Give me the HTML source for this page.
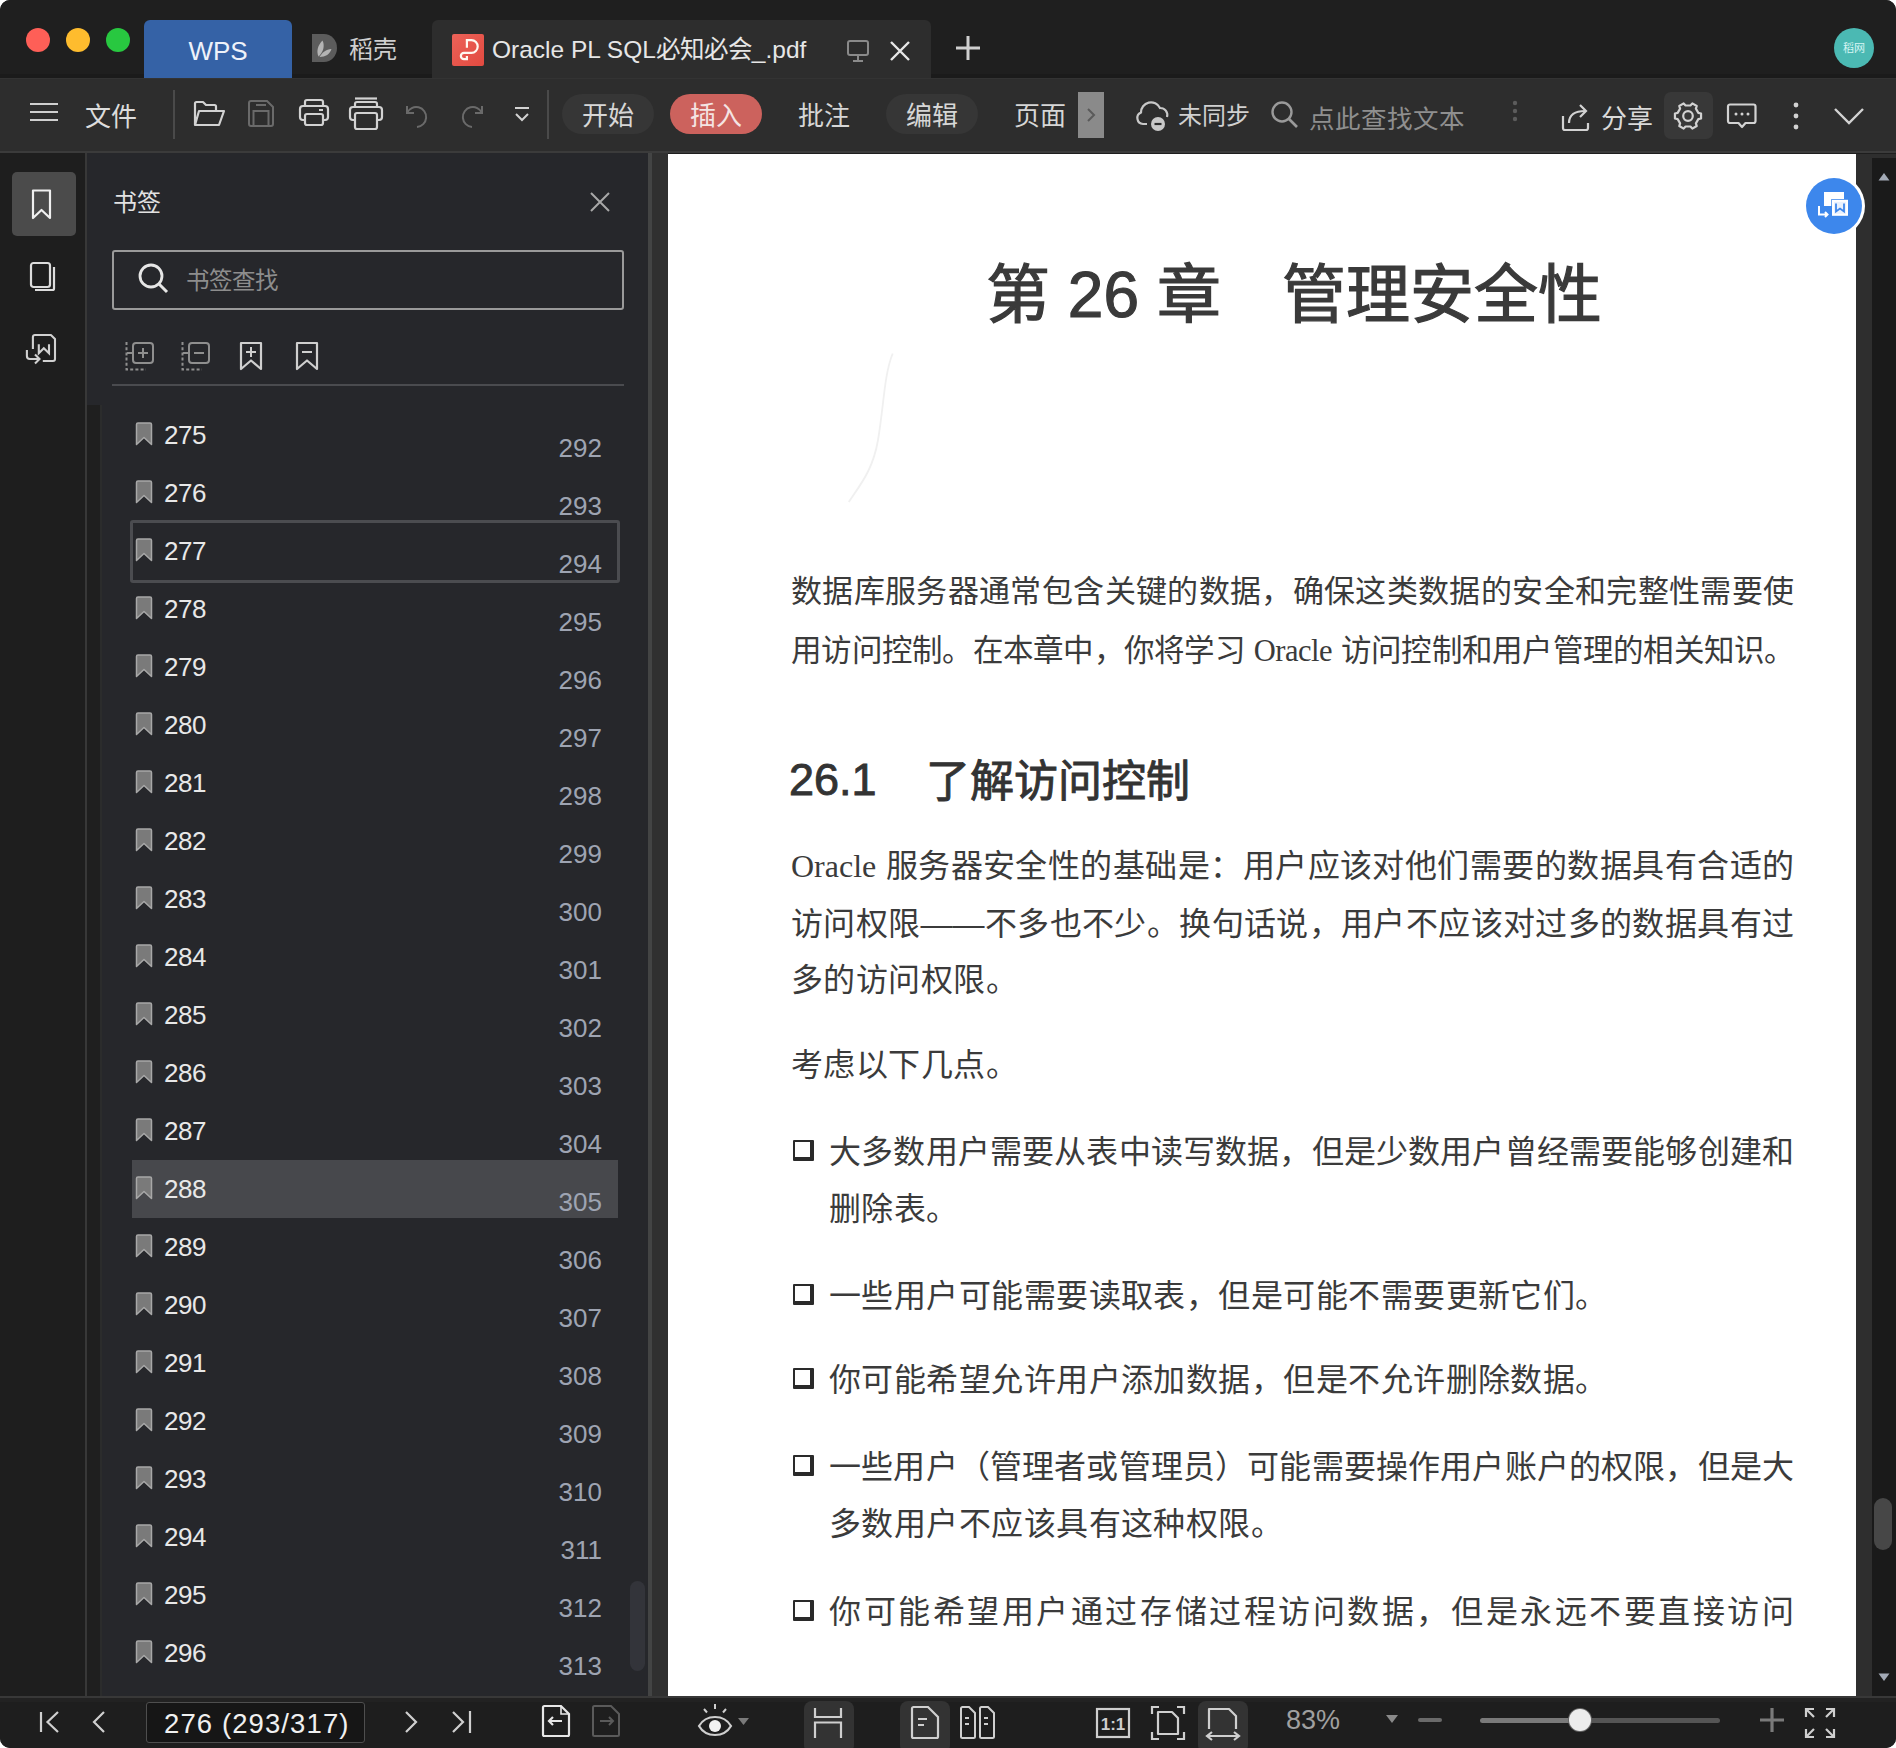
<!DOCTYPE html>
<html lang="zh-CN"><head><meta charset="utf-8"><title>WPS PDF</title>
<style>
html,body{margin:0;padding:0;background:#ffffff;}
body{width:1896px;height:1748px;overflow:hidden;position:relative;font-family:"Liberation Sans", sans-serif;}
#win{position:absolute;left:0;top:0;width:1896px;height:1748px;border-radius:10px;overflow:hidden;background:#1e1e1e;}
.t{position:absolute;white-space:nowrap;font-family:"Liberation Sans", sans-serif;}
.r{position:absolute;}
.sf{font-family:"Liberation Serif", serif;}
</style></head><body><div id="win">
<div class="r" style="left:0px;top:0px;width:1896px;height:78px;background:#1f1f1f;"></div>
<div class="r" style="left:0px;top:74px;width:1896px;height:4px;background:#1b1b1b;"></div>
<div class="r" style="left:26px;top:28px;width:24px;height:24px;background:#fe5f57;border-radius:50%;"></div>
<div class="r" style="left:66px;top:28px;width:24px;height:24px;background:#febc2e;border-radius:50%;"></div>
<div class="r" style="left:106px;top:28px;width:24px;height:24px;background:#28c840;border-radius:50%;"></div>
<div class="r" style="left:144px;top:20px;width:148px;height:58px;background:#3562a6;border-radius:6px 6px 0 0;"></div>
<div class="t " style="left:144px;top:37.5px;font-size:26px;line-height:26px;color:#eef2fa;width:148px;text-align:center;">WPS</div>
<svg class="r" style="left:310px;top:33px;" width="28" height="30" viewBox="0 0 28 30" fill="none"><path d="M2 1 H14 A13 14 0 0 1 14 29 H2 Z" fill="#5c5c5c"/><path d="M8.5 23.5 C 6 18, 8 12, 12.5 7.5 C 15 12.5, 13.5 19, 8.5 23.5 Z" fill="#b4b4b4"/><path d="M9.5 24 C 12 19.5, 16 16.5, 21.5 16 C 20 21, 15.5 24, 9.5 24 Z" fill="#b4b4b4"/></svg>
<div class="t " style="left:349px;top:37.9px;font-size:24px;line-height:24px;color:#cfcfcf;text-align:left;">稻壳</div>
<div class="r" style="left:432px;top:20px;width:499px;height:58px;background:#2d2d2d;border-radius:6px 6px 0 0;"></div>
<svg class="r" style="left:452px;top:34px;" width="32" height="32" viewBox="0 0 32 32" fill="none"><defs><linearGradient id="pg" x1="0" y1="0" x2="1" y2="1"><stop offset="0" stop-color="#ec6258"/><stop offset="1" stop-color="#e24a40"/></linearGradient></defs><rect x="0" y="0" width="32" height="32" rx="2" fill="url(#pg)"/><path d="M14.9 13.8 V6.2 H19.5 A6.2 6.35 0 0 1 19.5 18.9 H12 A3.15 3.15 0 0 0 12 25.2 H14.9 V22" stroke="#fff8f0" stroke-width="2.2" fill="none"/></svg>
<div class="t " style="left:492px;top:38.2px;font-size:24.5px;line-height:24.5px;color:#e6e6e6;text-align:left;">Oracle PL SQL必知必会_.pdf</div>
<svg class="r" style="left:846px;top:39px;" width="24" height="24" viewBox="0 0 24 24" fill="none"><rect x="2" y="2" width="20" height="14" rx="2" stroke="#8a8a8a" stroke-width="2"/><path d="M12 16 V21 M7 22 H17" stroke="#8a8a8a" stroke-width="2"/></svg>
<svg class="r" style="left:888px;top:39px;" width="24" height="24" viewBox="0 0 24 24" fill="none"><path d="M3 3 L21 21 M21 3 L3 21" stroke="#e8e8e8" stroke-width="2.4"/></svg>
<svg class="r" style="left:954px;top:34px;" width="28" height="28" viewBox="0 0 28 28" fill="none"><path d="M14 2 V26 M2 14 H26" stroke="#cfcfcf" stroke-width="3"/></svg>
<div class="r" style="left:1834px;top:28px;width:40px;height:40px;background:#4bb9b3;border-radius:50%;"></div>
<div class="t " style="left:1834px;top:43.2px;font-size:11px;line-height:11px;color:#d8f6f3;width:40px;text-align:center;">稻网</div>
<div class="r" style="left:0px;top:78px;width:1896px;height:73px;background:#2d2d2d;"></div>
<div class="r" style="left:0px;top:78px;width:1896px;height:1px;background:#333333;"></div>
<div class="r" style="left:0px;top:151px;width:1896px;height:2px;background:#3b3b3b;"></div>
<svg class="r" style="left:28px;top:100px;" width="32" height="24" viewBox="0 0 32 24" fill="none"><path d="M2 4 H30 M2 12 H30 M2 20 H30" stroke="#cfcfcf" stroke-width="2.2"/></svg>
<div class="t " style="left:85px;top:103.6px;font-size:26px;line-height:26px;color:#dcdcdc;text-align:left;">文件</div>
<div class="r" style="left:173px;top:90px;width:2px;height:49px;background:#4a4a4a;"></div>
<svg class="r" style="left:192px;top:100px;" width="36" height="28" viewBox="0 0 36 28" fill="none"><path d="M3 25 V3.5 A1.5 1.5 0 0 1 4.5 2 H11 L14 5 H22.5 A1.5 1.5 0 0 1 24 6.5 V10" stroke="#d2d2d2" stroke-width="2.2" stroke-linejoin="round"/><path d="M7 11 H32 L27 25 H3 Z" stroke="#d2d2d2" stroke-width="2.2" stroke-linejoin="round"/></svg>
<svg class="r" style="left:246px;top:99px;" width="30" height="29" viewBox="0 0 30 29" fill="none"><path d="M3 4 A2 2 0 0 1 5 2 H21 L27 8 V25 A2 2 0 0 1 25 27 H5 A2 2 0 0 1 3 25 Z" stroke="#6a6a6a" stroke-width="2"/><path d="M7.5 27 V12 H22.5 V27 M10 6 H20" stroke="#6a6a6a" stroke-width="2"/></svg>
<svg class="r" style="left:298px;top:98px;" width="32" height="30" viewBox="0 0 32 30" fill="none"><path d="M7 8 V4 A2 2 0 0 1 9 2 H23 A2 2 0 0 1 25 4 V8" stroke="#d2d2d2" stroke-width="2.2"/><path d="M7 22 H5 A3 3 0 0 1 2 19 V11 A3 3 0 0 1 5 8 H27 A3 3 0 0 1 30 11 V19 A3 3 0 0 1 27 22 H25" stroke="#d2d2d2" stroke-width="2.2"/><rect x="7" y="16" width="18" height="11" rx="2" stroke="#d2d2d2" stroke-width="2.2"/><path d="M21 12 H25" stroke="#d2d2d2" stroke-width="2"/></svg>
<svg class="r" style="left:348px;top:96px;" width="36" height="36" viewBox="0 0 36 36" fill="none"><path d="M7 2.5 H29" stroke="#d2d2d2" stroke-width="2.2"/><path d="M7 11 V8 A2 2 0 0 1 9 6 H27 A2 2 0 0 1 29 8 V11" stroke="#d2d2d2" stroke-width="2.2"/><path d="M7 24 H5 A3 3 0 0 1 2 21 V14 A3 3 0 0 1 5 11 H31 A3 3 0 0 1 34 14 V21 A3 3 0 0 1 31 24 H29" stroke="#d2d2d2" stroke-width="2.2"/><rect x="7" y="17" width="22" height="16" rx="2" stroke="#d2d2d2" stroke-width="2.2"/></svg>
<svg class="r" style="left:403px;top:102px;" width="30" height="28" viewBox="0 0 30 28" fill="none"><path d="M4 4 V11 H11" stroke="#6a6a6a" stroke-width="2"/><path d="M4 11 A10 10 0 1 1 14 25" stroke="#6a6a6a" stroke-width="2"/></svg>
<svg class="r" style="left:456px;top:102px;" width="30" height="28" viewBox="0 0 30 28" fill="none"><path d="M26 4 V11 H19" stroke="#6a6a6a" stroke-width="2"/><path d="M26 11 A10 10 0 1 0 16 25" stroke="#6a6a6a" stroke-width="2"/></svg>
<svg class="r" style="left:512px;top:105px;" width="20" height="20" viewBox="0 0 20 20" fill="none"><path d="M3 3 H17" stroke="#d2d2d2" stroke-width="2"/><path d="M4 9 L10 15 L16 9" stroke="#d2d2d2" stroke-width="2"/></svg>
<div class="r" style="left:547px;top:90px;width:2px;height:49px;background:#4a4a4a;"></div>
<div class="r" style="left:562px;top:94px;width:92px;height:40px;background:#363636;border-radius:20px;"></div>
<div class="t " style="left:562px;top:102.6px;font-size:26px;line-height:26px;color:#d6d6d6;width:92px;text-align:center;">开始</div>
<div class="r" style="left:670px;top:94px;width:92px;height:40px;background:#cc625d;border-radius:20px;"></div>
<div class="t " style="left:670px;top:102.6px;font-size:26px;line-height:26px;color:#f4e4e3;width:92px;text-align:center;">插入</div>
<div class="t " style="left:778px;top:102.6px;font-size:26px;line-height:26px;color:#d6d6d6;width:92px;text-align:center;">批注</div>
<div class="r" style="left:886px;top:94px;width:92px;height:40px;background:#363636;border-radius:20px;"></div>
<div class="t " style="left:886px;top:102.6px;font-size:26px;line-height:26px;color:#d6d6d6;width:92px;text-align:center;">编辑</div>
<div class="t " style="left:1014px;top:102.6px;font-size:26px;line-height:26px;color:#d6d6d6;text-align:left;">页面</div>
<div class="r" style="left:1078px;top:92px;width:26px;height:46px;background:#8a8a8a;"></div>
<svg class="r" style="left:1078px;top:92px;" width="26" height="46" viewBox="0 0 26 46" fill="none"><path d="M10 17 L16 23 L10 29" stroke="#5a5a5a" stroke-width="2"/></svg>
<svg class="r" style="left:1135px;top:98px;" width="38" height="36" viewBox="0 0 38 36" fill="none"><path d="M12 26 H8 A6 6 0 0 1 6 14.5 A10 10 0 0 1 25 10 A7 7 0 0 1 32 19" stroke="#c8c8c8" stroke-width="2.2" fill="none"/><circle cx="23" cy="26" r="7" fill="#c8c8c8"/><path d="M19.5 26 H26.5" stroke="#2b2b2b" stroke-width="2.2"/></svg>
<div class="t " style="left:1178px;top:104.4px;font-size:24px;line-height:24px;color:#d0d0d0;text-align:left;">未同步</div>
<svg class="r" style="left:1270px;top:100px;" width="30" height="30" viewBox="0 0 30 30" fill="none"><circle cx="12" cy="12" r="9.5" stroke="#9a9a9a" stroke-width="2.4"/><path d="M19 19 L27 27" stroke="#9a9a9a" stroke-width="2.6"/></svg>
<div class="t " style="left:1309px;top:106.8px;font-size:25.5px;line-height:25.5px;color:#8f8f8f;text-align:left;">点此查找文本</div>
<svg class="r" style="left:1510px;top:98px;" width="10" height="30" viewBox="0 0 10 30" fill="none"><circle cx="5" cy="5" r="2.2" fill="#5c5c5c"/><circle cx="5" cy="13" r="2.2" fill="#5c5c5c"/><circle cx="5" cy="21" r="2.2" fill="#5c5c5c"/></svg>
<svg class="r" style="left:1560px;top:102px;" width="32" height="32" viewBox="0 0 32 32" fill="none"><path d="M3 14 V26 A2 2 0 0 0 5 28 H26 A2 2 0 0 0 28 26 V21" stroke="#d2d2d2" stroke-width="2.2"/><path d="M9 21 C 9 13, 15 9, 25 9" stroke="#d2d2d2" stroke-width="2.2"/><path d="M20 3 L26 9 L20 15" stroke="#d2d2d2" stroke-width="2.2"/></svg>
<div class="t " style="left:1601px;top:105.6px;font-size:26px;line-height:26px;color:#dadada;text-align:left;">分享</div>
<div class="r" style="left:1664px;top:92px;width:49px;height:47px;background:#383838;border-radius:7px;"></div>
<svg class="r" style="left:1672px;top:100px;" width="32" height="32" viewBox="0 0 32 32" fill="none"><path d="M26.33 12.84 L29.06 13.46 L29.06 18.54 L26.33 19.16 L23.90 23.37 L24.73 26.04 L20.33 28.58 L18.43 26.52 L13.57 26.52 L11.67 28.58 L7.27 26.04 L8.10 23.37 L5.67 19.16 L2.94 18.54 L2.94 13.46 L5.67 12.84 L8.10 8.63 L7.27 5.96 L11.67 3.42 L13.57 5.48 L18.43 5.48 L20.33 3.42 L24.73 5.96 L23.90 8.63 Z" stroke="#d2d2d2" stroke-width="2.2" stroke-linejoin="round"/><circle cx="16" cy="16" r="4.8" stroke="#d2d2d2" stroke-width="2.2"/></svg>
<svg class="r" style="left:1726px;top:102px;" width="32" height="30" viewBox="0 0 32 30" fill="none"><path d="M4 2.5 H27.5 A2 2 0 0 1 29.5 4.5 V19 A2 2 0 0 1 27.5 21 H19.5 L16 25 L12.5 21 H4 A2 2 0 0 1 2 19 V4.5 A2 2 0 0 1 4 2.5 Z" stroke="#d2d2d2" stroke-width="2.2" stroke-linejoin="round"/><circle cx="10" cy="12" r="1.5" fill="#d2d2d2"/><circle cx="16" cy="12" r="1.5" fill="#d2d2d2"/><circle cx="22" cy="12" r="1.5" fill="#d2d2d2"/></svg>
<svg class="r" style="left:1790px;top:100px;" width="12" height="32" viewBox="0 0 12 32" fill="none"><circle cx="6" cy="5" r="2.4" fill="#d2d2d2"/><circle cx="6" cy="16" r="2.4" fill="#d2d2d2"/><circle cx="6" cy="27" r="2.4" fill="#d2d2d2"/></svg>
<svg class="r" style="left:1832px;top:106px;" width="34" height="20" viewBox="0 0 34 20" fill="none"><path d="M3 3 L17 17 L31 3" stroke="#d2d2d2" stroke-width="2.4"/></svg>
<div class="r" style="left:0px;top:153px;width:85px;height:1543px;background:#1e1e1e;"></div>
<div class="r" style="left:85px;top:153px;width:2px;height:1543px;background:#383838;"></div>
<div class="r" style="left:12px;top:172px;width:64px;height:64px;background:#4b4b4b;border-radius:5px;"></div>
<svg class="r" style="left:30px;top:188px;" width="24" height="34" viewBox="0 0 24 34" fill="none"><path d="M3 2.5 H20 V30 L11.5 22 L3 30 Z" stroke="#f0f0f0" stroke-width="2.2" stroke-linejoin="round"/></svg>
<svg class="r" style="left:28px;top:260px;" width="30" height="34" viewBox="0 0 30 34" fill="none"><rect x="3" y="3" width="19" height="24" rx="2.5" stroke="#dcdcdc" stroke-width="2.2"/><path d="M26 7 V28.5 A1.5 1.5 0 0 1 24.5 30 H7" stroke="#dcdcdc" stroke-width="2.2"/></svg>
<svg class="r" style="left:24px;top:332px;" width="36" height="34" viewBox="0 0 36 34" fill="none"><path d="M8.9 17 V5 A2 2 0 0 1 10.9 3 H26.9 L31 7 V27 A2 2 0 0 1 29 29 H18.8" stroke="#d0d0d0" stroke-width="2.1" stroke-linejoin="round"/><path d="M14.8 12.2 V21.3 L19.8 16.3 L25 21.3 V12.2" stroke="#d0d0d0" stroke-width="2.1"/><path d="M2.9 18 V24 A3 3 0 0 0 5.9 27 H15.5 M11 22.5 L15.5 27 L11 31.5" stroke="#d0d0d0" stroke-width="2.1"/></svg>
<div class="r" style="left:87px;top:153px;width:561px;height:1543px;background:#26272b;"></div>
<div class="r" style="left:648px;top:153px;width:4px;height:1543px;background:#434444;"></div>
<div class="r" style="left:652px;top:153px;width:16px;height:1543px;background:#303030;"></div>
<div class="t " style="left:113px;top:191.4px;font-size:24px;line-height:24px;color:#e2e2e2;text-align:left;">书签</div>
<svg class="r" style="left:588px;top:190px;" width="24" height="24" viewBox="0 0 24 24" fill="none"><path d="M3 3 L21 21 M21 3 L3 21" stroke="#a8a8a8" stroke-width="2"/></svg>
<div class="r" style="left:112px;top:250px;width:512px;height:60px;background:transparent;box-sizing:border-box;border:2px solid #9a9a9a;border-radius:3px;"></div>
<svg class="r" style="left:137px;top:262px;" width="34" height="34" viewBox="0 0 34 34" fill="none"><circle cx="14" cy="14" r="11" stroke="#e6e6e6" stroke-width="2.8"/><path d="M22 22 L30 30" stroke="#e6e6e6" stroke-width="3"/></svg>
<div class="t " style="left:186px;top:269.7px;font-size:23.5px;line-height:23.5px;color:#8d8d8d;text-align:left;">书签查找</div>
<svg class="r" style="left:124px;top:341px;" width="32" height="31" viewBox="0 0 32 31" fill="none"><path d="M2.5 1 V28.5 H22" stroke="#8f8f8f" stroke-width="2" stroke-dasharray="3 2.2"/><path d="M3 12 H8" stroke="#8f8f8f" stroke-width="2"/><rect x="9" y="2" width="20" height="20" rx="3" stroke="#8f8f8f" stroke-width="2"/><path d="M14 12 H24" stroke="#8f8f8f" stroke-width="2"/><path d="M19 7 V17" stroke="#8f8f8f" stroke-width="2"/></svg>
<svg class="r" style="left:180px;top:341px;" width="32" height="31" viewBox="0 0 32 31" fill="none"><path d="M2.5 1 V28.5 H22" stroke="#8f8f8f" stroke-width="2" stroke-dasharray="3 2.2"/><path d="M3 12 H8" stroke="#8f8f8f" stroke-width="2"/><rect x="9" y="2" width="20" height="20" rx="3" stroke="#8f8f8f" stroke-width="2"/><path d="M14 12 H24" stroke="#8f8f8f" stroke-width="2"/></svg>
<svg class="r" style="left:239px;top:341px;" width="24" height="31" viewBox="0 0 24 31" fill="none"><path d="M2 2 H22 V28 L12 19.5 L2 28 Z" stroke="#cfcfcf" stroke-width="2.2" stroke-linejoin="round"/><path d="M7 11 H17" stroke="#cfcfcf" stroke-width="2"/><path d="M12 6 V16" stroke="#cfcfcf" stroke-width="2"/></svg>
<svg class="r" style="left:295px;top:341px;" width="24" height="31" viewBox="0 0 24 31" fill="none"><path d="M2 2 H22 V28 L12 19.5 L2 28 Z" stroke="#cfcfcf" stroke-width="2.2" stroke-linejoin="round"/><path d="M7 11 H17" stroke="#cfcfcf" stroke-width="2"/></svg>
<div class="r" style="left:112px;top:384px;width:512px;height:2px;background:#4a4b4f;"></div>
<div class="r" style="left:87px;top:405px;width:13px;height:1291px;background:#1f1f1f;"></div>
<div class="r" style="left:100px;top:405px;width:1.5px;height:1291px;background:#2b2c2c;"></div>
<svg class="r" style="left:135px;top:422px;" width="18" height="24" viewBox="0 0 18 24" fill="none"><path d="M1.5 2.5 A1.5 1.5 0 0 1 3 1 H15 A1.5 1.5 0 0 1 16.5 2.5 V22.5 L9 15.5 L1.5 22.5 Z" fill="#7a7a7a" stroke="#a8a8a8" stroke-width="1.5" stroke-linejoin="round"/></svg>
<div class="t " style="left:164px;top:422.0px;font-size:26px;line-height:26px;color:#e8e8e8;text-align:left;letter-spacing:-0.4px;">275</div>
<div class="t " style="left:400px;top:435.0px;font-size:26px;line-height:26px;color:#9ea4b2;width:202px;text-align:right;">292</div>
<svg class="r" style="left:135px;top:480px;" width="18" height="24" viewBox="0 0 18 24" fill="none"><path d="M1.5 2.5 A1.5 1.5 0 0 1 3 1 H15 A1.5 1.5 0 0 1 16.5 2.5 V22.5 L9 15.5 L1.5 22.5 Z" fill="#7a7a7a" stroke="#a8a8a8" stroke-width="1.5" stroke-linejoin="round"/></svg>
<div class="t " style="left:164px;top:480.0px;font-size:26px;line-height:26px;color:#e8e8e8;text-align:left;letter-spacing:-0.4px;">276</div>
<div class="t " style="left:400px;top:493.0px;font-size:26px;line-height:26px;color:#9ea4b2;width:202px;text-align:right;">293</div>
<div class="r" style="left:130px;top:519.5px;width:490px;height:63px;background:transparent;box-sizing:border-box;border:3px solid #4b4c50;border-radius:3px;"></div>
<svg class="r" style="left:135px;top:538px;" width="18" height="24" viewBox="0 0 18 24" fill="none"><path d="M1.5 2.5 A1.5 1.5 0 0 1 3 1 H15 A1.5 1.5 0 0 1 16.5 2.5 V22.5 L9 15.5 L1.5 22.5 Z" fill="#7a7a7a" stroke="#a8a8a8" stroke-width="1.5" stroke-linejoin="round"/></svg>
<div class="t " style="left:164px;top:538.0px;font-size:26px;line-height:26px;color:#e8e8e8;text-align:left;letter-spacing:-0.4px;">277</div>
<div class="t " style="left:400px;top:551.0px;font-size:26px;line-height:26px;color:#9ea4b2;width:202px;text-align:right;">294</div>
<svg class="r" style="left:135px;top:596px;" width="18" height="24" viewBox="0 0 18 24" fill="none"><path d="M1.5 2.5 A1.5 1.5 0 0 1 3 1 H15 A1.5 1.5 0 0 1 16.5 2.5 V22.5 L9 15.5 L1.5 22.5 Z" fill="#7a7a7a" stroke="#a8a8a8" stroke-width="1.5" stroke-linejoin="round"/></svg>
<div class="t " style="left:164px;top:596.0px;font-size:26px;line-height:26px;color:#e8e8e8;text-align:left;letter-spacing:-0.4px;">278</div>
<div class="t " style="left:400px;top:609.0px;font-size:26px;line-height:26px;color:#9ea4b2;width:202px;text-align:right;">295</div>
<svg class="r" style="left:135px;top:654px;" width="18" height="24" viewBox="0 0 18 24" fill="none"><path d="M1.5 2.5 A1.5 1.5 0 0 1 3 1 H15 A1.5 1.5 0 0 1 16.5 2.5 V22.5 L9 15.5 L1.5 22.5 Z" fill="#7a7a7a" stroke="#a8a8a8" stroke-width="1.5" stroke-linejoin="round"/></svg>
<div class="t " style="left:164px;top:654.0px;font-size:26px;line-height:26px;color:#e8e8e8;text-align:left;letter-spacing:-0.4px;">279</div>
<div class="t " style="left:400px;top:667.0px;font-size:26px;line-height:26px;color:#9ea4b2;width:202px;text-align:right;">296</div>
<svg class="r" style="left:135px;top:712px;" width="18" height="24" viewBox="0 0 18 24" fill="none"><path d="M1.5 2.5 A1.5 1.5 0 0 1 3 1 H15 A1.5 1.5 0 0 1 16.5 2.5 V22.5 L9 15.5 L1.5 22.5 Z" fill="#7a7a7a" stroke="#a8a8a8" stroke-width="1.5" stroke-linejoin="round"/></svg>
<div class="t " style="left:164px;top:712.0px;font-size:26px;line-height:26px;color:#e8e8e8;text-align:left;letter-spacing:-0.4px;">280</div>
<div class="t " style="left:400px;top:725.0px;font-size:26px;line-height:26px;color:#9ea4b2;width:202px;text-align:right;">297</div>
<svg class="r" style="left:135px;top:770px;" width="18" height="24" viewBox="0 0 18 24" fill="none"><path d="M1.5 2.5 A1.5 1.5 0 0 1 3 1 H15 A1.5 1.5 0 0 1 16.5 2.5 V22.5 L9 15.5 L1.5 22.5 Z" fill="#7a7a7a" stroke="#a8a8a8" stroke-width="1.5" stroke-linejoin="round"/></svg>
<div class="t " style="left:164px;top:770.0px;font-size:26px;line-height:26px;color:#e8e8e8;text-align:left;letter-spacing:-0.4px;">281</div>
<div class="t " style="left:400px;top:783.0px;font-size:26px;line-height:26px;color:#9ea4b2;width:202px;text-align:right;">298</div>
<svg class="r" style="left:135px;top:828px;" width="18" height="24" viewBox="0 0 18 24" fill="none"><path d="M1.5 2.5 A1.5 1.5 0 0 1 3 1 H15 A1.5 1.5 0 0 1 16.5 2.5 V22.5 L9 15.5 L1.5 22.5 Z" fill="#7a7a7a" stroke="#a8a8a8" stroke-width="1.5" stroke-linejoin="round"/></svg>
<div class="t " style="left:164px;top:828.0px;font-size:26px;line-height:26px;color:#e8e8e8;text-align:left;letter-spacing:-0.4px;">282</div>
<div class="t " style="left:400px;top:841.0px;font-size:26px;line-height:26px;color:#9ea4b2;width:202px;text-align:right;">299</div>
<svg class="r" style="left:135px;top:886px;" width="18" height="24" viewBox="0 0 18 24" fill="none"><path d="M1.5 2.5 A1.5 1.5 0 0 1 3 1 H15 A1.5 1.5 0 0 1 16.5 2.5 V22.5 L9 15.5 L1.5 22.5 Z" fill="#7a7a7a" stroke="#a8a8a8" stroke-width="1.5" stroke-linejoin="round"/></svg>
<div class="t " style="left:164px;top:886.0px;font-size:26px;line-height:26px;color:#e8e8e8;text-align:left;letter-spacing:-0.4px;">283</div>
<div class="t " style="left:400px;top:899.0px;font-size:26px;line-height:26px;color:#9ea4b2;width:202px;text-align:right;">300</div>
<svg class="r" style="left:135px;top:944px;" width="18" height="24" viewBox="0 0 18 24" fill="none"><path d="M1.5 2.5 A1.5 1.5 0 0 1 3 1 H15 A1.5 1.5 0 0 1 16.5 2.5 V22.5 L9 15.5 L1.5 22.5 Z" fill="#7a7a7a" stroke="#a8a8a8" stroke-width="1.5" stroke-linejoin="round"/></svg>
<div class="t " style="left:164px;top:944.0px;font-size:26px;line-height:26px;color:#e8e8e8;text-align:left;letter-spacing:-0.4px;">284</div>
<div class="t " style="left:400px;top:957.0px;font-size:26px;line-height:26px;color:#9ea4b2;width:202px;text-align:right;">301</div>
<svg class="r" style="left:135px;top:1002px;" width="18" height="24" viewBox="0 0 18 24" fill="none"><path d="M1.5 2.5 A1.5 1.5 0 0 1 3 1 H15 A1.5 1.5 0 0 1 16.5 2.5 V22.5 L9 15.5 L1.5 22.5 Z" fill="#7a7a7a" stroke="#a8a8a8" stroke-width="1.5" stroke-linejoin="round"/></svg>
<div class="t " style="left:164px;top:1002.0px;font-size:26px;line-height:26px;color:#e8e8e8;text-align:left;letter-spacing:-0.4px;">285</div>
<div class="t " style="left:400px;top:1015.0px;font-size:26px;line-height:26px;color:#9ea4b2;width:202px;text-align:right;">302</div>
<svg class="r" style="left:135px;top:1060px;" width="18" height="24" viewBox="0 0 18 24" fill="none"><path d="M1.5 2.5 A1.5 1.5 0 0 1 3 1 H15 A1.5 1.5 0 0 1 16.5 2.5 V22.5 L9 15.5 L1.5 22.5 Z" fill="#7a7a7a" stroke="#a8a8a8" stroke-width="1.5" stroke-linejoin="round"/></svg>
<div class="t " style="left:164px;top:1060.0px;font-size:26px;line-height:26px;color:#e8e8e8;text-align:left;letter-spacing:-0.4px;">286</div>
<div class="t " style="left:400px;top:1073.0px;font-size:26px;line-height:26px;color:#9ea4b2;width:202px;text-align:right;">303</div>
<svg class="r" style="left:135px;top:1118px;" width="18" height="24" viewBox="0 0 18 24" fill="none"><path d="M1.5 2.5 A1.5 1.5 0 0 1 3 1 H15 A1.5 1.5 0 0 1 16.5 2.5 V22.5 L9 15.5 L1.5 22.5 Z" fill="#7a7a7a" stroke="#a8a8a8" stroke-width="1.5" stroke-linejoin="round"/></svg>
<div class="t " style="left:164px;top:1118.0px;font-size:26px;line-height:26px;color:#e8e8e8;text-align:left;letter-spacing:-0.4px;">287</div>
<div class="t " style="left:400px;top:1131.0px;font-size:26px;line-height:26px;color:#9ea4b2;width:202px;text-align:right;">304</div>
<div class="r" style="left:132px;top:1160px;width:486px;height:58px;background:#47484c;"></div>
<svg class="r" style="left:135px;top:1176px;" width="18" height="24" viewBox="0 0 18 24" fill="none"><path d="M1.5 2.5 A1.5 1.5 0 0 1 3 1 H15 A1.5 1.5 0 0 1 16.5 2.5 V22.5 L9 15.5 L1.5 22.5 Z" fill="#7a7a7a" stroke="#a8a8a8" stroke-width="1.5" stroke-linejoin="round"/></svg>
<div class="t " style="left:164px;top:1176.0px;font-size:26px;line-height:26px;color:#e8e8e8;text-align:left;letter-spacing:-0.4px;">288</div>
<div class="t " style="left:400px;top:1189.0px;font-size:26px;line-height:26px;color:#9ea4b2;width:202px;text-align:right;">305</div>
<svg class="r" style="left:135px;top:1234px;" width="18" height="24" viewBox="0 0 18 24" fill="none"><path d="M1.5 2.5 A1.5 1.5 0 0 1 3 1 H15 A1.5 1.5 0 0 1 16.5 2.5 V22.5 L9 15.5 L1.5 22.5 Z" fill="#7a7a7a" stroke="#a8a8a8" stroke-width="1.5" stroke-linejoin="round"/></svg>
<div class="t " style="left:164px;top:1234.0px;font-size:26px;line-height:26px;color:#e8e8e8;text-align:left;letter-spacing:-0.4px;">289</div>
<div class="t " style="left:400px;top:1247.0px;font-size:26px;line-height:26px;color:#9ea4b2;width:202px;text-align:right;">306</div>
<svg class="r" style="left:135px;top:1292px;" width="18" height="24" viewBox="0 0 18 24" fill="none"><path d="M1.5 2.5 A1.5 1.5 0 0 1 3 1 H15 A1.5 1.5 0 0 1 16.5 2.5 V22.5 L9 15.5 L1.5 22.5 Z" fill="#7a7a7a" stroke="#a8a8a8" stroke-width="1.5" stroke-linejoin="round"/></svg>
<div class="t " style="left:164px;top:1292.0px;font-size:26px;line-height:26px;color:#e8e8e8;text-align:left;letter-spacing:-0.4px;">290</div>
<div class="t " style="left:400px;top:1305.0px;font-size:26px;line-height:26px;color:#9ea4b2;width:202px;text-align:right;">307</div>
<svg class="r" style="left:135px;top:1350px;" width="18" height="24" viewBox="0 0 18 24" fill="none"><path d="M1.5 2.5 A1.5 1.5 0 0 1 3 1 H15 A1.5 1.5 0 0 1 16.5 2.5 V22.5 L9 15.5 L1.5 22.5 Z" fill="#7a7a7a" stroke="#a8a8a8" stroke-width="1.5" stroke-linejoin="round"/></svg>
<div class="t " style="left:164px;top:1350.0px;font-size:26px;line-height:26px;color:#e8e8e8;text-align:left;letter-spacing:-0.4px;">291</div>
<div class="t " style="left:400px;top:1363.0px;font-size:26px;line-height:26px;color:#9ea4b2;width:202px;text-align:right;">308</div>
<svg class="r" style="left:135px;top:1408px;" width="18" height="24" viewBox="0 0 18 24" fill="none"><path d="M1.5 2.5 A1.5 1.5 0 0 1 3 1 H15 A1.5 1.5 0 0 1 16.5 2.5 V22.5 L9 15.5 L1.5 22.5 Z" fill="#7a7a7a" stroke="#a8a8a8" stroke-width="1.5" stroke-linejoin="round"/></svg>
<div class="t " style="left:164px;top:1408.0px;font-size:26px;line-height:26px;color:#e8e8e8;text-align:left;letter-spacing:-0.4px;">292</div>
<div class="t " style="left:400px;top:1421.0px;font-size:26px;line-height:26px;color:#9ea4b2;width:202px;text-align:right;">309</div>
<svg class="r" style="left:135px;top:1466px;" width="18" height="24" viewBox="0 0 18 24" fill="none"><path d="M1.5 2.5 A1.5 1.5 0 0 1 3 1 H15 A1.5 1.5 0 0 1 16.5 2.5 V22.5 L9 15.5 L1.5 22.5 Z" fill="#7a7a7a" stroke="#a8a8a8" stroke-width="1.5" stroke-linejoin="round"/></svg>
<div class="t " style="left:164px;top:1466.0px;font-size:26px;line-height:26px;color:#e8e8e8;text-align:left;letter-spacing:-0.4px;">293</div>
<div class="t " style="left:400px;top:1479.0px;font-size:26px;line-height:26px;color:#9ea4b2;width:202px;text-align:right;">310</div>
<svg class="r" style="left:135px;top:1524px;" width="18" height="24" viewBox="0 0 18 24" fill="none"><path d="M1.5 2.5 A1.5 1.5 0 0 1 3 1 H15 A1.5 1.5 0 0 1 16.5 2.5 V22.5 L9 15.5 L1.5 22.5 Z" fill="#7a7a7a" stroke="#a8a8a8" stroke-width="1.5" stroke-linejoin="round"/></svg>
<div class="t " style="left:164px;top:1524.0px;font-size:26px;line-height:26px;color:#e8e8e8;text-align:left;letter-spacing:-0.4px;">294</div>
<div class="t " style="left:400px;top:1537.0px;font-size:26px;line-height:26px;color:#9ea4b2;width:202px;text-align:right;">311</div>
<svg class="r" style="left:135px;top:1582px;" width="18" height="24" viewBox="0 0 18 24" fill="none"><path d="M1.5 2.5 A1.5 1.5 0 0 1 3 1 H15 A1.5 1.5 0 0 1 16.5 2.5 V22.5 L9 15.5 L1.5 22.5 Z" fill="#7a7a7a" stroke="#a8a8a8" stroke-width="1.5" stroke-linejoin="round"/></svg>
<div class="t " style="left:164px;top:1582.0px;font-size:26px;line-height:26px;color:#e8e8e8;text-align:left;letter-spacing:-0.4px;">295</div>
<div class="t " style="left:400px;top:1595.0px;font-size:26px;line-height:26px;color:#9ea4b2;width:202px;text-align:right;">312</div>
<svg class="r" style="left:135px;top:1640px;" width="18" height="24" viewBox="0 0 18 24" fill="none"><path d="M1.5 2.5 A1.5 1.5 0 0 1 3 1 H15 A1.5 1.5 0 0 1 16.5 2.5 V22.5 L9 15.5 L1.5 22.5 Z" fill="#7a7a7a" stroke="#a8a8a8" stroke-width="1.5" stroke-linejoin="round"/></svg>
<div class="t " style="left:164px;top:1640.0px;font-size:26px;line-height:26px;color:#e8e8e8;text-align:left;letter-spacing:-0.4px;">296</div>
<div class="t " style="left:400px;top:1653.0px;font-size:26px;line-height:26px;color:#9ea4b2;width:202px;text-align:right;">313</div>
<div class="r" style="left:630px;top:1581px;width:15px;height:90px;background:#33343a;border-radius:8px;"></div>
<div class="r" style="left:668px;top:154px;width:1188px;height:1542px;background:#ffffff;"></div>
<svg class="r" style="left:840px;top:345px;" width="60" height="165" viewBox="0 0 60 165" fill="none"><path d="M52.7 8.5 C 44 30, 44 60, 38 95 C 33 125, 20 140, 8.8 157" stroke="#f0f0f0" stroke-width="1.8"/></svg>
<div class="r" style="left:1856px;top:154px;width:16px;height:1542px;background:#2e2e2e;"></div>
<div class="r" style="left:1872px;top:154px;width:24px;height:4px;background:#2e2e2e;"></div>
<div class="r" style="left:1872px;top:158px;width:24px;height:1538px;background:#1a1a1a;"></div>
<svg class="r" style="left:1877px;top:171px;" width="14" height="12" viewBox="0 0 14 12" fill="none"><path d="M7 2 L12.5 9.5 H1.5 Z" fill="#a3aab6"/></svg>
<svg class="r" style="left:1877px;top:1671px;" width="14" height="12" viewBox="0 0 14 12" fill="none"><path d="M7 10 L12.5 2.5 H1.5 Z" fill="#a3aab6"/></svg>
<div class="r" style="left:1874px;top:1498px;width:18px;height:52px;background:#474747;border-radius:9px;"></div>
<div class="t " style="left:986px;top:262.8px;font-size:64px;line-height:64px;color:#3a3a3a;text-align:left;white-space:pre;-webkit-text-stroke:1.2px #3a3a3a;">第 26 章</div>
<div class="t " style="left:1282px;top:262.8px;font-size:64px;line-height:64px;color:#3a3a3a;text-align:left;-webkit-text-stroke:1.2px #3a3a3a;">管理安全性</div>
<div class="t " style="left:791px;top:576.4px;font-size:31px;line-height:31px;color:#3b3b3b;width:1003px;text-align:left;text-align:justify;text-align-last:justify;white-space:nowrap;">数据库服务器通常包含关键的数据，确保这类数据的安全和完整性需要使</div>
<div class="t " style="left:791px;top:634.6px;font-size:30.5px;line-height:30.5px;color:#3b3b3b;width:1003px;text-align:left;text-align:justify;text-align-last:justify;white-space:nowrap;letter-spacing:-0.5px;">用访问控制。在本章中，你将学习 <span class="sf">Oracle</span> 访问控制和用户管理的相关知识。</div>
<div class="t " style="left:789px;top:756.5px;font-size:45px;line-height:45px;color:#333333;text-align:left;-webkit-text-stroke:0.9px #333;">26.1</div>
<div class="t " style="left:926px;top:759.6px;font-size:44px;line-height:44px;color:#333333;text-align:left;-webkit-text-stroke:0.9px #333;">了解访问控制</div>
<div class="t " style="left:791px;top:849.9px;font-size:32px;line-height:32px;color:#3b3b3b;width:1003px;text-align:left;text-align:justify;text-align-last:justify;white-space:nowrap;"><span class="sf">Oracle</span> 服务器安全性的基础是：用户应该对他们需要的数据具有合适的</div>
<div class="t " style="left:791px;top:907.9px;font-size:32px;line-height:32px;color:#3b3b3b;width:1003px;text-align:left;text-align:justify;text-align-last:justify;white-space:nowrap;">访问权限——不多也不少。换句话说，用户不应该对过多的数据具有过</div>
<div class="t " style="left:791px;top:963.9px;font-size:32px;line-height:32px;color:#3b3b3b;width:1003px;text-align:left;white-space:nowrap;letter-spacing:0.45px;">多的访问权限。</div>
<div class="t " style="left:791px;top:1048.9px;font-size:32px;line-height:32px;color:#3b3b3b;width:1003px;text-align:left;white-space:nowrap;letter-spacing:0.45px;">考虑以下几点。</div>
<div class="t " style="left:829px;top:1135.9px;font-size:32px;line-height:32px;color:#3b3b3b;width:965px;text-align:left;text-align:justify;text-align-last:justify;white-space:nowrap;">大多数用户需要从表中读写数据，但是少数用户曾经需要能够创建和</div>
<div class="t " style="left:829px;top:1192.9px;font-size:32px;line-height:32px;color:#3b3b3b;width:965px;text-align:left;white-space:nowrap;letter-spacing:0.45px;">删除表。</div>
<div class="t " style="left:829px;top:1279.9px;font-size:32px;line-height:32px;color:#3b3b3b;width:965px;text-align:left;white-space:nowrap;letter-spacing:0.45px;">一些用户可能需要读取表，但是可能不需要更新它们。</div>
<div class="t " style="left:829px;top:1363.9px;font-size:32px;line-height:32px;color:#3b3b3b;width:965px;text-align:left;white-space:nowrap;letter-spacing:0.45px;">你可能希望允许用户添加数据，但是不允许删除数据。</div>
<div class="t " style="left:829px;top:1450.9px;font-size:32px;line-height:32px;color:#3b3b3b;width:965px;text-align:left;text-align:justify;text-align-last:justify;white-space:nowrap;">一些用户（管理者或管理员）可能需要操作用户账户的权限，但是大</div>
<div class="t " style="left:829px;top:1507.9px;font-size:32px;line-height:32px;color:#3b3b3b;width:965px;text-align:left;white-space:nowrap;letter-spacing:0.45px;">多数用户不应该具有这种权限。</div>
<div class="t " style="left:829px;top:1595.9px;font-size:32px;line-height:32px;color:#3b3b3b;width:965px;text-align:left;text-align:justify;text-align-last:justify;white-space:nowrap;">你可能希望用户通过存储过程访问数据，但是永远不要直接访问</div>
<div class="r" style="left:793px;top:1139.5px;width:21px;height:21px;background:transparent;box-sizing:border-box;border:2.5px solid #2a2a2a;border-right-width:4.5px;border-bottom-width:4.5px;border-radius:1px;"></div>
<div class="r" style="left:793px;top:1283.5px;width:21px;height:21px;background:transparent;box-sizing:border-box;border:2.5px solid #2a2a2a;border-right-width:4.5px;border-bottom-width:4.5px;border-radius:1px;"></div>
<div class="r" style="left:793px;top:1367.5px;width:21px;height:21px;background:transparent;box-sizing:border-box;border:2.5px solid #2a2a2a;border-right-width:4.5px;border-bottom-width:4.5px;border-radius:1px;"></div>
<div class="r" style="left:793px;top:1454.5px;width:21px;height:21px;background:transparent;box-sizing:border-box;border:2.5px solid #2a2a2a;border-right-width:4.5px;border-bottom-width:4.5px;border-radius:1px;"></div>
<div class="r" style="left:793px;top:1599.5px;width:21px;height:21px;background:transparent;box-sizing:border-box;border:2.5px solid #2a2a2a;border-right-width:4.5px;border-bottom-width:4.5px;border-radius:1px;"></div>
<div class="r" style="left:1806px;top:178px;width:56px;height:56px;background:#3d87ec;border-radius:50%;box-shadow:0 0 0 3px #fff;"></div>
<svg class="r" style="left:1806px;top:178px;" width="56" height="56" viewBox="0 0 56 56" fill="none"><rect x="18" y="14" width="20" height="14" fill="#fff"/><rect x="26" y="21.8" width="16" height="16" fill="#e9f1fd" stroke="#3d87ec" stroke-width="1.5"/><rect x="27" y="22.8" width="14" height="14" fill="none" stroke="#fff" stroke-width="2"/><path d="M30 25.5 V33.5 L34 30.5 L38 33.5 V25.5" stroke="#3d87ec" stroke-width="1.8"/><path d="M13 28 V36.5 H21.5 M19 34 L21.5 36.5 L19 39" stroke="#fff" stroke-width="2"/></svg>
<div class="r" style="left:0px;top:1696px;width:1896px;height:52px;background:#1e1e1e;"></div>
<div class="r" style="left:0px;top:1696px;width:1896px;height:2.3px;background:#383838;"></div>
<div class="r" style="left:0px;top:1698.3px;width:1896px;height:3.4px;background:#222222;"></div>
<svg class="r" style="left:36px;top:1708px;" width="26" height="28" viewBox="0 0 26 28" fill="none"><path d="M5 4 V24" stroke="#cfcfcf" stroke-width="2.2"/><path d="M22 4 L11.5 14 L22 24" stroke="#cfcfcf" stroke-width="2.2"/></svg>
<svg class="r" style="left:88px;top:1708px;" width="22" height="28" viewBox="0 0 22 28" fill="none"><path d="M16 4 L6 14 L16 24" stroke="#cfcfcf" stroke-width="2.2"/></svg>
<div class="r" style="left:146px;top:1702px;width:219px;height:41px;background:#161616;box-sizing:border-box;border:1.5px solid #4e4e4e;border-radius:3px;"></div>
<div class="t " style="left:164px;top:1709.8px;font-size:27.5px;line-height:27.5px;color:#f0f0f0;text-align:left;white-space:pre;letter-spacing:1.1px;">276 (293/317)</div>
<svg class="r" style="left:400px;top:1708px;" width="22" height="28" viewBox="0 0 22 28" fill="none"><path d="M6 4 L16 14 L6 24" stroke="#cfcfcf" stroke-width="2.2"/></svg>
<svg class="r" style="left:448px;top:1708px;" width="26" height="28" viewBox="0 0 26 28" fill="none"><path d="M5 4 L15 14 L5 24" stroke="#cfcfcf" stroke-width="2.2"/><path d="M22 3 V25" stroke="#cfcfcf" stroke-width="2.2"/></svg>
<svg class="r" style="left:540px;top:1704px;" width="32" height="34" viewBox="0 0 32 34" fill="none"><path d="M3 3.5 A1.5 1.5 0 0 1 4.5 2 H21 L29 10 V30.5 A1.5 1.5 0 0 1 27.5 32 H4.5 A1.5 1.5 0 0 1 3 30.5 Z" stroke="#e6e6e6" stroke-width="2.2"/><path d="M21 2 V10 H29" stroke="#e6e6e6" stroke-width="1.6"/><path d="M9 17 H22 M13 13 L9 17 L13 21" stroke="#e6e6e6" stroke-width="2.2"/></svg>
<svg class="r" style="left:590px;top:1704px;" width="32" height="34" viewBox="0 0 32 34" fill="none"><path d="M3 3.5 A1.5 1.5 0 0 1 4.5 2 H21 L29 10 V30.5 A1.5 1.5 0 0 1 27.5 32 H4.5 A1.5 1.5 0 0 1 3 30.5 Z" stroke="#5a5a5a" stroke-width="2"/><path d="M10 17 H23 M19 13 L23 17 L19 21" stroke="#5a5a5a" stroke-width="2"/></svg>
<svg class="r" style="left:696px;top:1703px;" width="60" height="40" viewBox="0 0 60 40" fill="none"><path d="M19 1 V6 M8 6 L11 9.5 M30 6 L27 9.5" stroke="#cfcfcf" stroke-width="2"/><path d="M3 23 C 10 11, 28 11, 35 23 C 28 35, 10 35, 3 23 Z" stroke="#cfcfcf" stroke-width="2.2"/><circle cx="19" cy="23" r="6" fill="#f2f2f2"/><path d="M42 15 H53 L47.5 22 Z" fill="#7a7a7a"/></svg>
<div class="r" style="left:804px;top:1701px;width:50px;height:52px;background:#333333;border-radius:8px;"></div>
<svg class="r" style="left:810px;top:1705px;" width="36" height="36" viewBox="0 0 36 36" fill="none"><path d="M5 3 V12 H31 V3 M5 33 V17.5 H31 V33" stroke="#cfcfcf" stroke-width="2.2"/></svg>
<div class="r" style="left:900px;top:1701px;width:50px;height:52px;background:#333333;border-radius:8px;"></div>
<svg class="r" style="left:908px;top:1704px;" width="34" height="36" viewBox="0 0 34 36" fill="none"><path d="M4 4.5 A1.5 1.5 0 0 1 5.5 3 H20 L30 13 V32.5 A1.5 1.5 0 0 1 28.5 34 H5.5 A1.5 1.5 0 0 1 4 32.5 Z" stroke="#cfcfcf" stroke-width="2.2"/><path d="M10 15 H19 M10 21 H16" stroke="#cfcfcf" stroke-width="2"/></svg>
<svg class="r" style="left:958px;top:1704px;" width="42" height="36" viewBox="0 0 42 36" fill="none"><path d="M3 4.5 A1.5 1.5 0 0 1 4.5 3 H11 L17 9 V32.5 A1.5 1.5 0 0 1 15.5 34 H4.5 A1.5 1.5 0 0 1 3 32.5 Z M22 4.5 A1.5 1.5 0 0 1 23.5 3 H30 L36 9 V32.5 A1.5 1.5 0 0 1 34.5 34 H23.5 A1.5 1.5 0 0 1 22 32.5 Z" stroke="#cfcfcf" stroke-width="2"/><path d="M7 14 H11 M7 20 H11 M26 14 H30 M26 20 H30" stroke="#cfcfcf" stroke-width="1.8"/></svg>
<svg class="r" style="left:1094px;top:1706px;" width="38" height="34" viewBox="0 0 38 34" fill="none"><rect x="3" y="3" width="32" height="28" stroke="#cfcfcf" stroke-width="2.2"/><text x="19" y="23.5" font-family="Liberation Sans" font-size="17" font-weight="bold" fill="#cfcfcf" text-anchor="middle">1:1</text></svg>
<svg class="r" style="left:1150px;top:1705px;" width="36" height="36" viewBox="0 0 36 36" fill="none"><path d="M2 9 V2 H9 M27 2 H34 V9 M34 27 V34 H27 M9 34 H2 V27" stroke="#cfcfcf" stroke-width="2.2"/><path d="M8 7 H22 L28 13 V29 H8 Z" stroke="#cfcfcf" stroke-width="2.2" stroke-linejoin="round"/></svg>
<div class="r" style="left:1198px;top:1701px;width:50px;height:52px;background:#333333;border-radius:8px;"></div>
<svg class="r" style="left:1204px;top:1705px;" width="38" height="36" viewBox="0 0 38 36" fill="none"><path d="M5 24 V4 H25 L32 11 V24" stroke="#cfcfcf" stroke-width="2.2" stroke-linejoin="round"/><path d="M3 31 H35 M8 27 L3 31 L8 35 M30 27 L35 31 L30 35" stroke="#cfcfcf" stroke-width="2.2"/></svg>
<div class="t " style="left:1286px;top:1707.0px;font-size:27px;line-height:27px;color:#a0a0a0;text-align:left;">83%</div>
<svg class="r" style="left:1384px;top:1712px;" width="16" height="14" viewBox="0 0 16 14" fill="none"><path d="M2 3 H14 L8 11 Z" fill="#8a8a8a"/></svg>
<div class="r" style="left:1418px;top:1718px;width:24px;height:4px;background:#6a6a6a;border-radius:2px;"></div>
<div class="r" style="left:1480px;top:1718px;width:100px;height:5px;background:#7a7a7a;border-radius:2.5px;"></div>
<div class="r" style="left:1580px;top:1718px;width:140px;height:5px;background:#555555;border-radius:2.5px;"></div>
<div class="r" style="left:1569px;top:1709px;width:22px;height:22px;background:#ececec;border-radius:50%;box-shadow:0 0 0 1px #666;"></div>
<svg class="r" style="left:1758px;top:1706px;" width="28" height="28" viewBox="0 0 28 28" fill="none"><path d="M14 2 V26 M2 14 H26" stroke="#7a7a7a" stroke-width="3.2"/></svg>
<svg class="r" style="left:1803px;top:1706px;" width="34" height="34" viewBox="0 0 34 34" fill="none"><path d="M3 11 V3 H11 M3 3 L11 11 M31 11 V3 H23 M31 3 L23 11 M3 23 V31 H11 M3 31 L11 23 M31 23 V31 H23 M31 31 L23 23" stroke="#cfcfcf" stroke-width="2.2"/></svg>
</div></body></html>
